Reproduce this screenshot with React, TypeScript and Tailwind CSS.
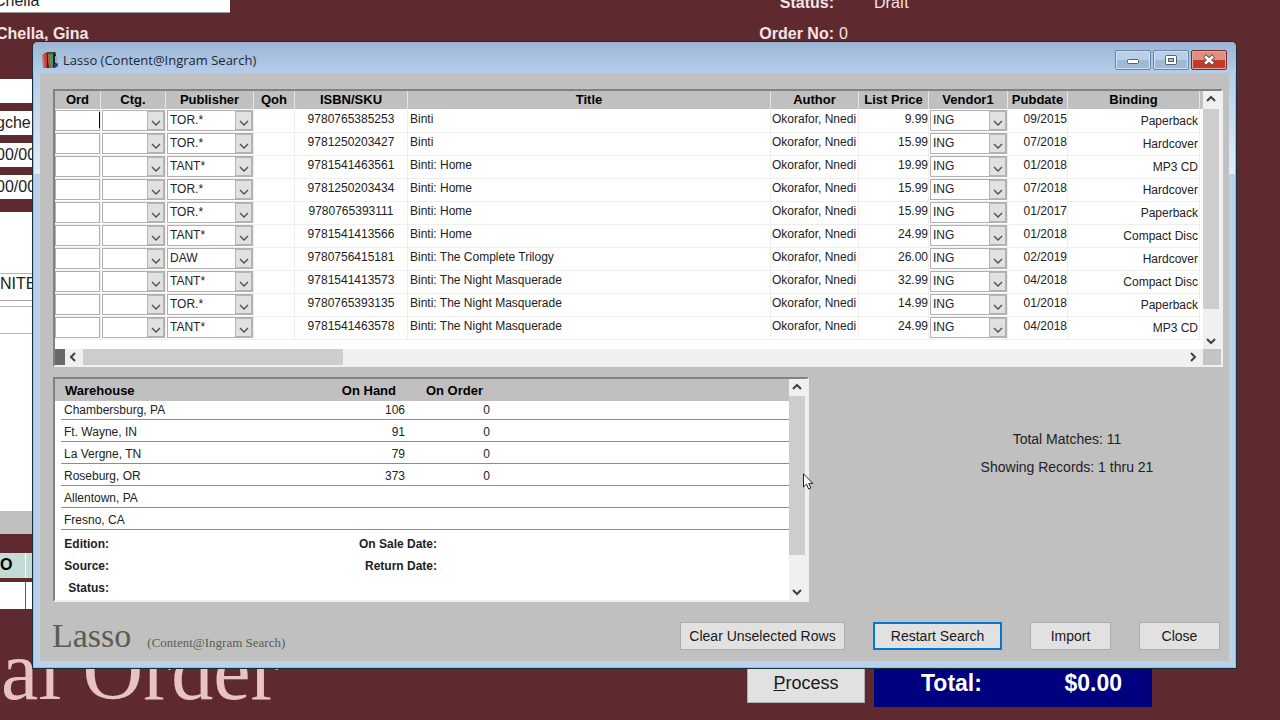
import { useState } from 'react';
import clsx from 'clsx';

type Title = {
  publisher: string;
  isbn: string;
  title: string;
  price: string;
  pubdate: string;
  binding: string;
};

const titles: Title[] = [
  { publisher: 'TOR.*', isbn: '9780765385253', title: 'Binti', price: '9.99', pubdate: '09/2015', binding: 'Paperback' },
  { publisher: 'TOR.*', isbn: '9781250203427', title: 'Binti', price: '15.99', pubdate: '07/2018', binding: 'Hardcover' },
  { publisher: 'TANT*', isbn: '9781541463561', title: 'Binti: Home', price: '19.99', pubdate: '01/2018', binding: 'MP3 CD' },
  { publisher: 'TOR.*', isbn: '9781250203434', title: 'Binti: Home', price: '15.99', pubdate: '07/2018', binding: 'Hardcover' },
  { publisher: 'TOR.*', isbn: '9780765393111', title: 'Binti: Home', price: '15.99', pubdate: '01/2017', binding: 'Paperback' },
  { publisher: 'TANT*', isbn: '9781541413566', title: 'Binti: Home', price: '24.99', pubdate: '01/2018', binding: 'Compact Disc' },
  { publisher: 'DAW', isbn: '9780756415181', title: 'Binti: The Complete Trilogy', price: '26.00', pubdate: '02/2019', binding: 'Hardcover' },
  { publisher: 'TANT*', isbn: '9781541413573', title: 'Binti: The Night Masquerade', price: '32.99', pubdate: '04/2018', binding: 'Compact Disc' },
  { publisher: 'TOR.*', isbn: '9780765393135', title: 'Binti: The Night Masquerade', price: '14.99', pubdate: '01/2018', binding: 'Paperback' },
  { publisher: 'TANT*', isbn: '9781541463578', title: 'Binti: The Night Masquerade', price: '24.99', pubdate: '04/2018', binding: 'MP3 CD' },
];

const columns = [
  { label: 'Ord', width: 'w-[46px]' },
  { label: 'Ctg.', width: 'w-[65px]' },
  { label: 'Publisher', width: 'w-[88px]' },
  { label: 'Qoh', width: 'w-[41px]' },
  { label: 'ISBN/SKU', width: 'w-[113px]' },
  { label: 'Title', width: '' },
  { label: 'Author', width: 'w-[88px]' },
  { label: 'List Price', width: 'w-[70px]' },
  { label: 'Vendor1', width: 'w-[79px]' },
  { label: 'Pubdate', width: 'w-[60px]' },
  { label: 'Binding', width: 'w-[132px]' },
];

const warehouses = [
  { name: 'Chambersburg, PA', onHand: '106', onOrder: '0' },
  { name: 'Ft. Wayne, IN', onHand: '91', onOrder: '0' },
  { name: 'La Vergne, TN', onHand: '79', onOrder: '0' },
  { name: 'Roseburg, OR', onHand: '373', onOrder: '0' },
  { name: 'Allentown, PA', onHand: '', onOrder: '' },
  { name: 'Fresno, CA', onHand: '', onOrder: '' },
];

const sunken = 'border-2 border-t-[#828282] border-l-[#828282] border-r-[#f0f0f0] border-b-[#f0f0f0]';

function Chevron({ className }: { className?: string }) {
  return (
    <svg viewBox="0 0 10 10" className={clsx('size-[10px]', className)} fill="none" stroke="currentColor" aria-hidden="true">
      <path d="M1 3 L5 7 L9 3" />
    </svg>
  );
}

function ScrollButton({ label, rotate }: { label: string; rotate: string }) {
  return (
    <button type="button" aria-label={label} className="flex size-4 shrink-0 items-center justify-center text-[#404040]">
      <Chevron className={clsx('stroke-2', rotate)} />
    </button>
  );
}

function Combo({ label, options }: { label: string; options: string[] }) {
  return (
    <div className="relative ml-px h-[21px] border border-[#b0b0b0] bg-white">
      <select aria-label={label} className="block h-full w-full appearance-none pb-[2px] pl-[2px] text-xs leading-4 outline-none">
        {options.map((option) => (
          <option key={option}>{option}</option>
        ))}
      </select>
      <span className="pointer-events-none absolute inset-y-0 right-0 flex w-[17px] items-center justify-center border border-[#b4b4b4] bg-[#e1e1e1] pt-1 text-[#505050]">
        <Chevron className="stroke-[1.4]" />
      </span>
    </div>
  );
}

function BooksIcon() {
  return (
    <svg viewBox="0 0 18 18" className="size-[18px]" aria-hidden="true">
      <path d="M1 4 L4 2 L4 17 L2 17 Z" fill="#b5796a" />
      <path d="M3 3 L7 1 L7 17 L4 17 Z" fill="#c8402c" />
      <path d="M6 3 L7 3 L8 17 L6 17 Z" fill="#3a1414" />
      <path d="M3 3 L6 1 L15 1 L13 3 Z" fill="#54433f" />
      <path d="M7 3 L9 3 L10 17 L8 17 Z" fill="#d2452f" />
      <path d="M9 3 L12 3 L12 17 L10 17 Z" fill="#2fa34c" />
      <path d="M12 3 L14 1 L15 4 L15 16 L12 17 Z" fill="#16202c" />
      <path d="M14 5 L16 5 L16 12 L14 12 Z" fill="#8ea9d4" />
      <path d="M13 13 L17 12 L17 15 L14 17 Z" fill="#2c4684" />
    </svg>
  );
}

function TitleBar() {
  const plain =
    'flex h-5 w-9 items-center justify-center rounded-[2px] border border-[#6b84a8] bg-linear-to-b from-[#b9cee7] from-50% to-[#9fb9d8] to-50% inset-shadow-[0_0_0_1px_#cfdff0]';
  return (
    <header className="flex h-[31px] items-center rounded-t-[5px] bg-linear-to-b from-[#9ab5d3] to-[#b6cdea] pt-1 pr-[9px] pl-2">
      <BooksIcon />
      <h1 className="ml-1 flex-1 font-['Open_Sans','Noto_Sans',sans-serif] text-[13px] leading-5 text-[#1c2733]">
        Lasso (Content@Ingram Search)
      </h1>
      <div className="flex gap-[2px]">
        <button type="button" aria-label="Minimize" className={plain}>
          <svg viewBox="0 0 12 12" className="size-3" aria-hidden="true">
            <rect x="0.5" y="5.5" width="11" height="4" rx="1" fill="#fff" stroke="#555f70" />
          </svg>
        </button>
        <button type="button" aria-label="Maximize" className={plain}>
          <svg viewBox="0 0 12 12" className="size-3" aria-hidden="true">
            <rect x="0.5" y="1.5" width="11" height="9" rx="1" fill="#fff" stroke="#555f70" />
            <rect x="3.5" y="4.5" width="5" height="3" fill="#9fb9d8" stroke="#555f70" />
          </svg>
        </button>
        <button
          type="button"
          aria-label="Close window"
          className="flex h-5 w-9 items-center justify-center rounded-[2px] border border-[#7a2d28] bg-linear-to-b from-[#dd8f80] from-50% to-[#c23c24] to-50% inset-shadow-[0_0_0_1px_#e5a79b]"
        >
          <svg viewBox="0 0 12 12" className="size-3" aria-hidden="true">
            <path d="M1.5 2 L10.5 10 M10.5 2 L1.5 10" stroke="#6d4a4e" strokeWidth="4.4" />
            <path d="M2 2.5 L10 9.5 M10 2.5 L2 9.5" stroke="#fff" strokeWidth="2.6" />
          </svg>
        </button>
      </div>
    </header>
  );
}

function ResultsGrid() {
  const cell = 'border-r border-b border-[#efefef] p-0 align-top leading-[19px] whitespace-nowrap';
  return (
    <section className={clsx('bg-white', sunken)}>
      <div className="flex">
        <div className="flex-1 bg-linear-to-b from-[#c0c0c0] from-[18px] to-white to-[18px] pr-[3px] pb-[9px]">
          <table className="w-full table-fixed border-separate border-spacing-0 text-xs">
            <thead>
              <tr className="h-[18px] bg-[#c0c0c0] text-[13px] leading-[18px] text-black">
                {columns.map((column) => (
                  <th key={column.label} className={clsx('border-r border-[#e4e4e4] p-0 text-center font-bold whitespace-nowrap', column.width)}>
                    {column.label}
                  </th>
                ))}
              </tr>
            </thead>
            <tbody className="before:block before:h-px">
              {titles.map((row, index) => (
                <tr key={row.isbn} className="h-[23px]">
                  <td className={clsx(cell, 'relative')}>
                    <input
                      aria-label={`Order quantity for ${row.isbn}`}
                      className="block h-[21px] w-full border border-[#b0b0b0] bg-white px-1 text-right outline-none"
                    />
                    {index === 0 && <span className="absolute top-[2px] right-0 h-4 w-px bg-black" />}
                  </td>
                  <td className={cell}>
                    <Combo label={`Category for ${row.isbn}`} options={['']} />
                  </td>
                  <td className={cell}>
                    <Combo label={`Publisher for ${row.isbn}`} options={[row.publisher]} />
                  </td>
                  <td className={cell} />
                  <td className={clsx(cell, 'text-center')}>{row.isbn}</td>
                  <td className={clsx(cell, 'pl-[2px]')}>{row.title}</td>
                  <td className={clsx(cell, 'pl-px')}>Okorafor, Nnedi</td>
                  <td className={clsx(cell, 'text-right')}>{row.price}</td>
                  <td className={cell}>
                    <Combo label={`Vendor for ${row.isbn}`} options={['ING']} />
                  </td>
                  <td className={clsx(cell, 'text-right')}>{row.pubdate}</td>
                  <td className="border-r border-b border-[#efefef] p-0 pr-px text-right align-middle">{row.binding}</td>
                </tr>
              ))}
            </tbody>
          </table>
        </div>
        <div className="flex w-[18px] flex-col items-start bg-[#f0f0f0]">
          <ScrollButton label="Scroll results up" rotate="rotate-180" />
          <div className="mt-[2px] h-[200px] w-4 bg-[#cdcdcd]" />
          <div className="flex-1" />
          <ScrollButton label="Scroll results down" rotate="rotate-0" />
        </div>
      </div>
      <div className="flex h-4 items-center bg-[#f0f0f0]">
        <div className="h-full w-[10px] bg-[#696969]" />
        <ScrollButton label="Scroll results left" rotate="rotate-90" />
        <div className="ml-[2px] h-full w-[260px] bg-[#cdcdcd]" />
        <div className="flex-1" />
        <ScrollButton label="Scroll results right" rotate="-rotate-90" />
        <div className="ml-[2px] h-full w-[18px] bg-[#c4c4c4]" />
      </div>
    </section>
  );
}

function WarehousePanel() {
  return (
    <section className={clsx('flex w-[756px] bg-white', sunken)}>
      <div className="flex-1 bg-linear-to-b from-[#c0c0c0] from-[22px] to-white to-[22px]">
        <table className="ml-[6px] w-[728px] table-fixed border-separate border-spacing-0 text-xs">
          <thead>
            <tr className="h-[23px] text-[13px] leading-[23px] text-black">
              <th className="w-[240px] p-0 pl-1 text-left font-bold">Warehouse</th>
              <th className="w-[104px] p-0 pr-[9px] text-right font-bold">On Hand</th>
              <th className="w-[85px] p-0 pr-[7px] text-right font-bold whitespace-nowrap">On Order</th>
              <th className="p-0" />
            </tr>
          </thead>
          <tbody>
            {warehouses.map((row, index) => {
              const line = clsx('border-b border-[#8c8c8c] p-0 leading-[17px]', index > 0 && 'pt-1');
              return (
                <tr key={row.name}>
                  <td className={clsx(line, 'pl-[3px]')}>{row.name}</td>
                  <td className={clsx(line, 'text-right')}>{row.onHand}</td>
                  <td className={clsx(line, 'text-right')}>{row.onOrder}</td>
                  <td className={line} />
                </tr>
              );
            })}
          </tbody>
        </table>
        <dl className="grid grid-cols-[54px_328px] gap-y-[2px] pt-1 pb-[2px] text-right text-xs leading-5 font-bold">
          <dt>Edition:</dt>
          <dt>On Sale Date:</dt>
          <dt>Source:</dt>
          <dt>Return Date:</dt>
          <dt>Status:</dt>
        </dl>
      </div>
      <div className="flex w-[18px] flex-col items-start bg-[#f0f0f0]">
        <ScrollButton label="Scroll warehouses up" rotate="rotate-180" />
        <div className="mt-px h-[159px] w-4 bg-[#cdcdcd]" />
        <div className="flex-1" />
        <ScrollButton label="Scroll warehouses down" rotate="rotate-0" />
      </div>
    </section>
  );
}

function LassoWindow() {
  const button = 'h-7 border bg-[#e1e1e1] text-sm leading-5 text-[#1a1a1a]';
  return (
    <div className="absolute top-[41px] right-[43px] left-8 rounded-t-md border border-[#17303d]">
      <div className="rounded-t-[5px] bg-[linear-gradient(#b6cdea_31px,#e3edf8_132px,#b9d1ea_132px)] inset-shadow-[0_0_0_1px_#7fcbe6]">
        <TitleBar />
        <div className="px-[7px] pb-[7px]">
          <div className="bg-[#c0c0c0] pt-4">
            <div className="pr-[6px] pl-[13px]">
              <ResultsGrid />
              <div className="mt-[10px] flex">
                <WarehousePanel />
                <div className="flex-1 pt-12 pl-[102px] text-center text-sm leading-7">
                  <p>Total Matches: 11</p>
                  <p>Showing Records: 1 thru 21</p>
                </div>
              </div>
            </div>
            <footer className="flex items-center pt-5 pr-[9px] pb-[11px] pl-3">
              <p className="flex h-7 flex-1 items-baseline gap-4 font-['Liberation_Serif',serif] leading-7 text-[#5c5c50]">
                <span className="text-[34px]">Lasso</span>
                <span className="text-[13px]">(Content@Ingram Search)</span>
              </p>
              <div className="flex gap-7">
                <button type="button" className={clsx(button, 'w-[165px] border-[#adadad]')}>Clear Unselected Rows</button>
                <button type="button" className={clsx(button, 'w-[129px] border-[#0078d7] inset-shadow-[0_0_0_1px_#0078d7]')}>Restart Search</button>
                <button type="button" className={clsx(button, 'w-[81px] border-[#adadad]')}>Import</button>
                <button type="button" className={clsx(button, 'w-[81px] border-[#adadad]')}>Close</button>
              </div>
            </footer>
          </div>
        </div>
      </div>
    </div>
  );
}

function OrderForm() {
  const [name, setName] = useState('Chella');
  const field = 'block h-6 w-full bg-white pb-px text-base text-[#222]';
  return (
    <div className="-mt-[11px]">
      <div className="flex items-end justify-between text-base text-[#f6e4e4]">
        <div className="-ml-[6px] w-[236px]">
          <input
            aria-label="Name"
            value={name}
            onChange={(event) => setName(event.target.value)}
            className="block h-6 w-full border-b border-[#999] bg-white text-[#222]"
          />
          <p className="pl-[2px] leading-[42px] font-bold">Chella, Gina</p>
        </div>
        <dl className="grid w-[523px] grid-cols-[77px_1fr] items-end text-base whitespace-nowrap">
          <dt className="text-right leading-5 font-bold">Status:</dt>
          <dd className="pl-10 leading-5">Draft</dd>
          <dt className="text-right leading-[42px] font-bold">Order No:</dt>
          <dd className="pl-[5px] leading-[42px]">0</dd>
        </dl>
      </div>
      <div className="mt-6 -ml-1 flex w-[236px] flex-col gap-2">
        <input aria-label="Account" className={field} />
        <input aria-label="Email" defaultValue="gche" className={field} />
        <input aria-label="Start date" defaultValue="00/00" className={field} />
        <input aria-label="End date" defaultValue="00/00" className={field} />
      </div>
      <div className="mt-[13px] w-[236px] bg-white text-base">
        <div className="h-[62px] border-b border-[#b5b5bd]" />
        <p className="h-[27px] border-b border-[#a5a5a5] leading-5">NITE</p>
        <div className="mt-[5px] h-7 border-y border-[#b5b5c5]" />
        <div className="h-[177px]" />
      </div>
      <div className="h-[23px] w-[236px] bg-[#c0c0c0]" />
      <div className="mt-[19px] flex h-[25px] w-[236px] divide-x divide-white bg-[#c5dbd5] text-base leading-6 font-bold text-black">
        <span className="w-[26px]">O</span>
        <span />
      </div>
      <div className="mt-1 flex h-[27px] w-[236px] divide-x divide-[#7a4a50] bg-white">
        <span className="w-[26px]" />
        <span />
      </div>
      <div className="flex items-end pt-5">
        <h2 className="flex-1 pl-px font-['Liberation_Serif',serif] text-[84px] leading-none text-[#e8c3c3]">al Order</h2>
        <button type="button" className="mb-[10px] h-10 w-[118px] border border-[#adadad] bg-[#e1e1e1] text-lg leading-6 text-[#1a1a1a]">
          <span className="underline">P</span>rocess
        </button>
        <div className="mr-32 mb-[6px] ml-[9px] flex h-12 w-[278px] items-center justify-between bg-[#00007f] pr-[30px] pl-[47px] text-[23px] font-bold text-white">
          <span>Total:</span>
          <span>$0.00</span>
        </div>
      </div>
    </div>
  );
}

export default function App() {
  return (
    <main className="relative min-h-screen overflow-hidden bg-[#5f2a2f] font-['Liberation_Sans',Arial,sans-serif] text-[#222]">
      <OrderForm />
      <LassoWindow />
      <svg viewBox="0 0 12 19" className="absolute top-[473px] left-[803px] h-[19px] w-3" aria-hidden="true">
        <path d="M0.5 0.8 V14 L3.5 11.2 L5.6 16 L7.8 15 L5.8 10.4 H9.8 Z" fill="#fff" stroke="#222" />
      </svg>
    </main>
  );
}
